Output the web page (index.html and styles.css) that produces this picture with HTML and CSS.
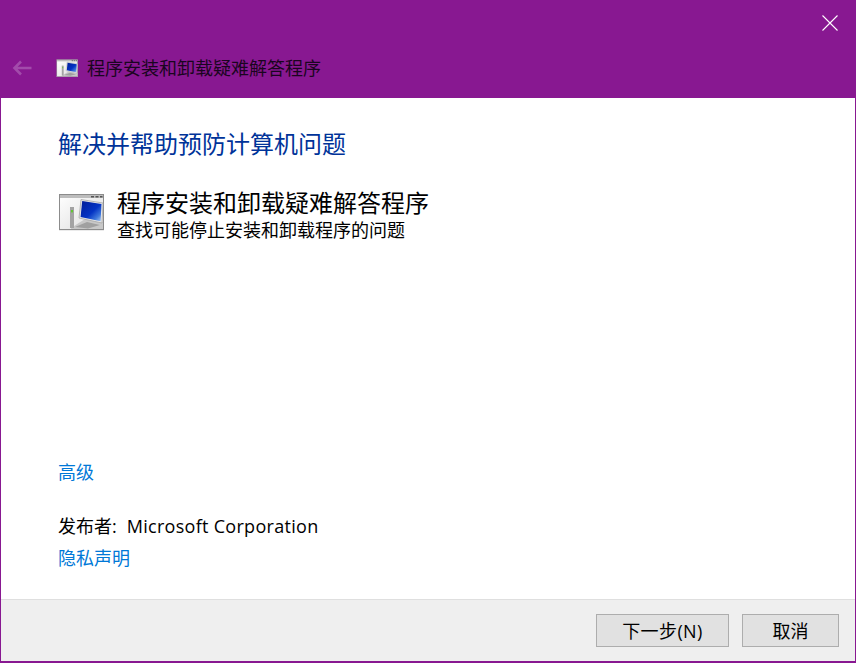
FILE: index.html
```html
<!DOCTYPE html>
<html lang="zh-CN">
<head>
<meta charset="utf-8">
<title>程序安装和卸载疑难解答程序</title>
<link rel="stylesheet" href="styles.css">
</head>
<body>
<svg class="defs" width="0" height="0" aria-hidden="true">
  <defs>
    <linearGradient id="frame" x1="0" y1="0" x2="1" y2="1">
      <stop offset="0" stop-color="#ffffff"/>
      <stop offset="1" stop-color="#dcdcdc"/>
    </linearGradient>
    <linearGradient id="screen" x1="0" y1="0" x2="1" y2="1">
      <stop offset="0" stop-color="#001c96"/>
      <stop offset="0.55" stop-color="#0433c4"/>
      <stop offset="0.8" stop-color="#3f78dc"/>
      <stop offset="1" stop-color="#a8c8f0"/>
    </linearGradient>
    <symbol id="app-icon" viewBox="0 0 46 38">
      <rect x="1" y="36" width="45" height="1.5" fill="#d8d8d8"/>
      <rect x="1.5" y="1.5" width="44" height="35" fill="url(#frame)" stroke="#8c8c8c"/>
      <rect x="2" y="2" width="43" height="3" fill="#bdbdbd"/>
      <rect x="33" y="3" width="3" height="1.5" fill="#555"/>
      <rect x="37.5" y="3" width="3" height="1.5" fill="#555"/>
      <rect x="42" y="3" width="2.5" height="1.5" fill="#555"/>
      <path d="M13 35 L27 26 L45 29 L45 36 L13 36 Z" fill="#c8c8c8"/>
      <path d="M17 34 L29 29 L42 32 L30 35.5 Z" fill="#a0a0a0"/>
      <rect x="12" y="14" width="4" height="21" fill="#a3a3a3"/>
      <rect x="13" y="17" width="2" height="2.4" fill="#62c832"/>
      <path d="M23 6.5 L45 10 L44 30 L21 25 Z" fill="#e6e6e6" stroke="#a0a0a0" stroke-width="0.7"/>
      <path d="M24.2 8 L43.5 11 L42.6 28.2 L22.6 24 Z" fill="url(#screen)"/>
    </symbol>
  </defs>
</svg>
<div class="window">
  <header class="titlebar">
    <div class="close-row">
      <svg class="close" width="16" height="16" viewBox="0 0 16 16" aria-hidden="true">
        <path d="M0.5 0.5 L15.5 15.5 M15.5 0.5 L0.5 15.5" stroke="#fff" stroke-width="1.1" fill="none"/>
      </svg>
    </div>
    <div class="nav-row">
      <svg class="back" width="20" height="16" viewBox="0 0 20 16" aria-hidden="true">
        <path d="M19.5 8 H2.5 M9 1.5 L2.5 8 L9 14.5" stroke="#a24bab" stroke-width="2.6" fill="none"/>
      </svg>
      <svg class="title-icon" width="22" height="18" aria-hidden="true"><use href="#app-icon"/></svg>
      <span class="title-text">程序安装和卸载疑难解答程序</span>
    </div>
  </header>
  <main class="content">
    <h1 class="heading">解决并帮助预防计算机问题</h1>
    <div class="item">
      <svg class="item-icon" width="46" height="38" aria-hidden="true"><use href="#app-icon"/></svg>
      <div class="item-text">
        <div class="item-title">程序安装和卸载疑难解答程序</div>
        <div class="item-sub">查找可能停止安装和卸载程序的问题</div>
      </div>
    </div>
    <div class="bottom">
      <a class="link advanced">高级</a>
      <div class="publisher"><span>发布者:</span><span class="company">Microsoft Corporation</span></div>
      <a class="link privacy">隐私声明</a>
    </div>
  </main>
  <footer class="footer">
    <button class="btn btn-next">下一步(N)</button>
    <button class="btn btn-cancel">取消</button>
  </footer>
</div>
</body>
</html>
```
FILE: styles.css
```css
* { box-sizing: border-box; }
html, body { margin: 0; padding: 0; height: 100%; }
body { font-family: "Open Sans", "Noto Sans CJK SC", sans-serif; background: #fff; overflow: hidden; }
.defs { display: block; height: 0; }
.window {
  width: 856px; height: 663px;
  display: flex; flex-direction: column;
  border: 1px solid #881891; border-top: 0;
  background: #fff;
}
.titlebar {
  height: 98px; flex: none;
  margin: 0 -1px;
  background: #881891;
  display: flex; flex-direction: column;
}
.close-row { display: flex; justify-content: flex-end; padding: 15px 18px 0 0; height: 52px; }
.close { display: block; }
.nav-row { display: flex; align-items: center; height: 32px; padding-left: 12px; }
.back { flex: none; margin-right: 24px; }
.title-icon { flex: none; margin-right: 9px; }
.title-text { font-size: 18px; line-height: 24px; color: #1a0520; }
.content { flex: 1; display: flex; flex-direction: column; padding: 29px 0 0 57px; min-height: 0; }
.heading { margin: 0; font-size: 24px; font-weight: 400; line-height: 34px; color: #003399; }
.item { display: flex; margin-top: 26px; }
.item-icon { flex: none; margin: 6px 13px 0 0; }
.item-text { display: flex; flex-direction: column; }
.item-title { font-size: 24px; line-height: 32px; color: #000; }
.item-sub { font-size: 18px; line-height: 20px; margin-top: 1px; color: #000; }
.bottom { margin-top: auto; padding-bottom: 29px; display: flex; flex-direction: column; }
.link { font-size: 18px; line-height: 24px; color: #0078d7; }
.publisher { display: flex; gap: 10px; font-size: 18px; line-height: 24px; color: #000; margin-top: 30px; }
.company { letter-spacing: 0.29px; }
.privacy { margin-top: 8px; }
.footer {
  flex: none; height: 63px;
  background: #efefef; border-top: 1px solid #dfdfdf;
  border-bottom: 1px solid #881891;
  display: flex; justify-content: flex-end; align-items: flex-start;
  gap: 13px; padding: 14px 16px 0 0;
}
.btn {
  height: 33px;
  font: inherit; font-size: 18px; line-height: 1; color: #000;
  background: #e1e1e1; border: 1px solid #adadad; padding: 0;
}
.btn-next { width: 133px; letter-spacing: 0.4px; }
.btn-cancel { width: 97px; }
```
